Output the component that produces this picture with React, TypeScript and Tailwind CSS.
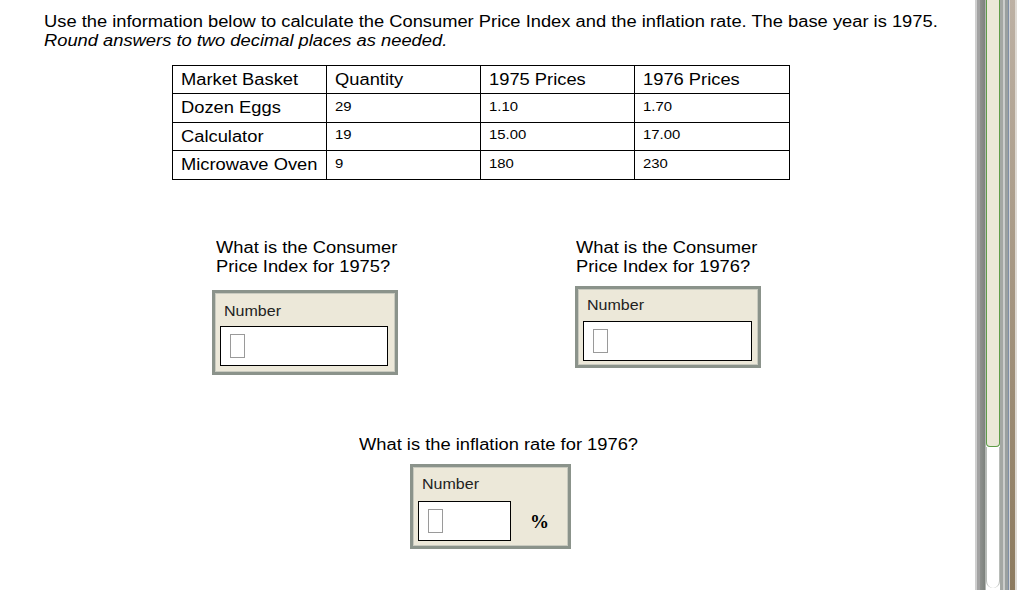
import React from 'react';

const rows = [
  ['Dozen Eggs', '29', '1.10', '1.70'],
  ['Calculator', '19', '15.00', '17.00'],
  ['Microwave Oven', '9', '180', '230'],
];

// the source picture is stretched sideways, so text is widened to match
const Wide = ({ children }: { children: React.ReactNode }) => (
  <span className="inline-block origin-left scale-x-[1.145] whitespace-nowrap">{children}</span>
);

const NumberInput = ({ width }: { width: string }) => (
  <div className={`${width} h-[40px] border border-black bg-white pl-[9px] pt-[7px]`}>
    <div className="w-[15px] h-[24px] border border-[#9a9a9a] bg-white" />
  </div>
);

const Scrollbar = () => (
  <div className="flex h-[590px] w-[49px] shrink-0">
    <div className="w-[2px] bg-[#cfcfcf]" />
    <div className="w-[3px] bg-[#a2a2a2]" />
    <div className="w-[5px] bg-gradient-to-r from-[#8e918e] to-[#7d827d]" />
    <div className="w-[1px] bg-[#b4b8b4]" />
    <div className="w-[14px] flex flex-col">
      <div className="h-[447px] bg-[#ebe8d8] border-l border-r border-b border-[#5e9d48] rounded-b-[4px]" />
      <div className="flex-1 bg-white border-l border-r border-[#b8bcb8] rounded-b-[7px] mb-[2px]" />
    </div>
    <div className="w-[3px] bg-[#a3a7a3]" />
    <div className="w-[2px] bg-[#cbcdcb]" />
    <div className="w-[3px] bg-[#9aa09f]" />
    <div className="w-[1px] bg-[#7f8fa6]" />
    <div className="w-[1px] bg-[#d2d2d2]" />
    <div className="w-[5px] bg-gradient-to-b from-[#bdb1a4] to-[#8c7a5e]" />
    <div className="w-[2px] bg-[#dedad4]" />
    <div className="flex-1 bg-white" />
  </div>
);

export default function App() {
  return (
    <div
      className="flex h-[590px] w-full overflow-hidden bg-white text-black"
      style={{ fontFamily: '"Liberation Sans", Arial, sans-serif' }}
    >
      <div className="flex-1 pl-[44px] pt-[12px]">
        <div className="text-[16px] leading-[19px]">
          <p>
            <Wide>Use the information below to calculate the Consumer Price Index and the inflation rate. The base year is 1975.</Wide>
          </p>
          <p className="italic">
            <Wide>Round answers to two decimal places as needed.</Wide>
          </p>
        </div>

        <div className="ml-[128px] mt-[15px] grid grid-cols-[154px_154px_154px_155px] border-l border-t border-black w-fit">
          {['Market Basket', 'Quantity', '1975 Prices', '1976 Prices'].map((h) => (
            <div key={h} className="h-[28px] border-r border-b border-black pl-2 flex items-center text-[16px]">
              <Wide>{h}</Wide>
            </div>
          ))}
          {rows.map((r, i) => (
            <React.Fragment key={r[0]}>
              <div className={`${i === 1 ? 'h-[28px]' : 'h-[29px]'} border-r border-b border-black pl-2 flex items-center text-[16px]`}>
                <Wide>{r[0]}</Wide>
              </div>
              {r.slice(1).map((c, j) => (
                <div
                  key={j}
                  className={`${i === 1 ? 'h-[28px]' : 'h-[29px]'} border-r border-b border-black pl-2 pb-[3px] flex items-center text-[13px]`}
                >
                  <Wide>{c}</Wide>
                </div>
              ))}
            </React.Fragment>
          ))}
        </div>

        <div className="flex mt-[58px]">
          <div className="ml-[168px] w-[186px]">
            <p className="pl-[4px] text-[16px] leading-[19px]">
              <Wide>
                What is the Consumer
                <br />
                Price Index for 1975?
              </Wide>
            </p>
            <div className="mt-[14px] h-[85px] border-[3px] border-[#8b938b] bg-[#ece8d9] pl-[5px] pt-[10px] shadow-[inset_0_0_0_1px_#c9cabf]">
              <p className="pl-[4px] text-[14px] leading-[16px] text-[#222]">
                <Wide>Number</Wide>
              </p>
              <div className="mt-[7px]">
                <NumberInput width="w-[168px]" />
              </div>
            </div>
          </div>

          <div className="ml-[177px] w-[186px]">
            <p className="pl-[1px] text-[16px] leading-[19px]">
              <Wide>
                What is the Consumer
                <br />
                Price Index for 1976?
              </Wide>
            </p>
            <div className="mt-[10px] h-[82px] border-[3px] border-[#8b938b] bg-[#ece8d9] pl-[5px] pt-[8px] shadow-[inset_0_0_0_1px_#c9cabf]">
              <p className="pl-[4px] text-[14px] leading-[16px] text-[#222]">
                <Wide>Number</Wide>
              </p>
              <div className="mt-[8px]">
                <NumberInput width="w-[169px]" />
              </div>
            </div>
          </div>
        </div>

        <div className="mt-[60px] ml-[315px]">
          <p className="text-[16px] leading-[19px]">
            <Wide>What is the inflation rate for 1976?</Wide>
          </p>
          <div className="ml-[51px] mt-[10px] w-[161px] h-[85px] border-[3px] border-[#8b938b] bg-[#ece8d9] pl-[5px] pt-[9px] shadow-[inset_0_0_0_1px_#c9cabf]">
            <p className="pl-[4px] text-[14px] leading-[16px] text-[#222]">
              <Wide>Number</Wide>
            </p>
            <div className="mt-[9px] flex items-center">
              <NumberInput width="w-[93px]" />
              <span
                className="ml-[19px] text-[19px] font-bold leading-none"
                style={{ fontFamily: '"Liberation Serif", "Times New Roman", serif' }}
              >
                %
              </span>
            </div>
          </div>
        </div>
      </div>
      <Scrollbar />
    </div>
  );
}
